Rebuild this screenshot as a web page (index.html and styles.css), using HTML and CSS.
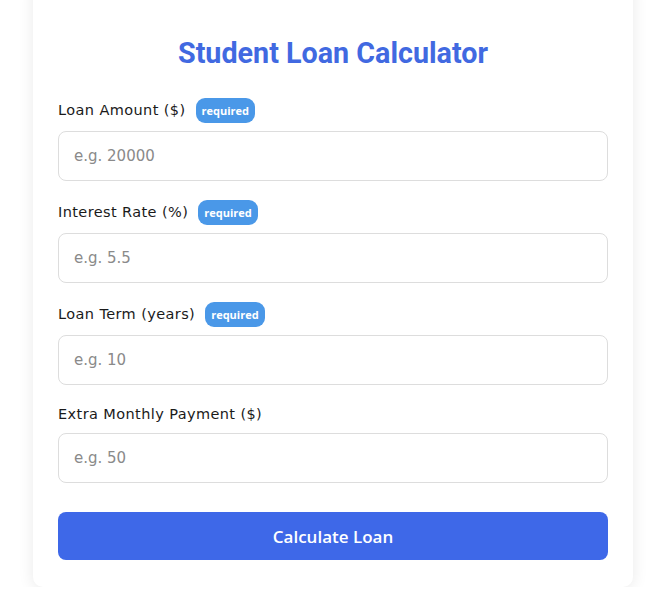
FILE: index.html
```html
<!DOCTYPE html>
<html lang="en">

<head>
    <meta charset="UTF-8">
    <meta name="viewport" content="width=device-width, initial-scale=1.0">
    <title>Student Loan Calculator</title>
    <link rel="stylesheet" href="styles.css">
</head>

<body>
    <div class="calculator">
        <h1>Student Loan Calculator</h1>
        <form class="loan-form">
            <div class="form-group">
                <label for="amount">Loan Amount ($) <span class="badge">required</span></label>
                <input type="number" id="amount" placeholder="e.g. 20000">
            </div>
            <div class="form-group">
                <label for="rate">Interest Rate (%) <span class="badge">required</span></label>
                <input type="number" id="rate" placeholder="e.g. 5.5">
            </div>
            <div class="form-group">
                <label for="term">Loan Term (years) <span class="badge">required</span></label>
                <input type="number" id="term" placeholder="e.g. 10">
            </div>
            <div class="form-group">
                <label for="extra">Extra Monthly Payment ($)</label>
                <input type="number" id="extra" placeholder="e.g. 50">
            </div>
            <button type="button" class="calc-btn">Calculate Loan</button>
        </form>
    </div>
</body>

</html>
```

FILE: styles.css
```css
body,
html {
    margin: 0;
    padding: 0;
    font-family: "DejaVu Sans", Arial, sans-serif;
    background-color: #fff;
}

.calculator {
    width: 600px;
    box-sizing: border-box;
    margin: -20px 0 0 33px;
    padding: 56px 25px 27px;
    background: #fff;
    border-radius: 10px;
    box-shadow: 0 2px 16px rgba(0, 0, 0, 0.09);
}

h1 {
    margin: 0 0 28px;
    text-align: center;
    font-family: Roboto, Arial, sans-serif;
    font-weight: 700;
    font-size: 28.7px;
    line-height: 34px;
    color: #4169e1;
}

.form-group {
    margin-bottom: 19px;
}

label {
    display: flex;
    align-items: center;
    gap: 10px;
    margin-bottom: 8px;
    font-size: 14.5px;
    letter-spacing: 0.4px;
    line-height: 21px;
    color: #1a1a1a;
}

.badge {
    background: #4a98e8;
    color: #fff;
    font-family: "Open Sans", Arial, sans-serif;
    font-size: 11px;
    font-weight: 700;
    letter-spacing: 0;
    padding: 4px 6px;
    border-radius: 9px;
    line-height: 17px;
}

input {
    display: block;
    width: 100%;
    box-sizing: border-box;
    height: 50px;
    padding: 0 15px;
    border: 1px solid #ddd;
    border-radius: 8px;
    font-family: inherit;
    font-size: 15px;
    color: #333;
}

input::placeholder {
    color: #8a8a8a;
}

.calc-btn {
    display: block;
    width: 100%;
    height: 48px;
    margin-top: 29px;
    border: none;
    border-radius: 8px;
    background: #3e68e8;
    color: #fff;
    font-family: "Open Sans", Arial, sans-serif;
    font-size: 17px;
    font-weight: 600;
    cursor: pointer;
}
```
